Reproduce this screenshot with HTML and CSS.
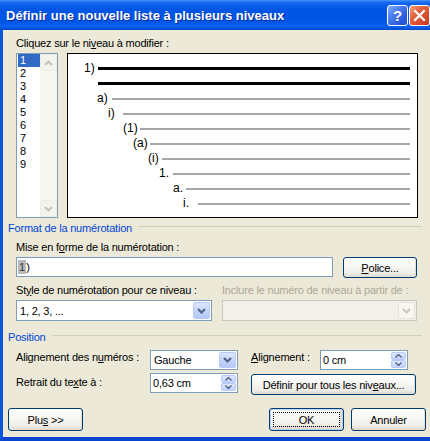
FILE: index.html
```html
<!DOCTYPE html>
<html lang="fr">
<head>
<meta charset="utf-8">
<title>Définir une nouvelle liste à plusieurs niveaux</title>
<link rel="stylesheet" href="styles.css">
</head>
<body>
<div class="window">
  <div class="titlebar">
    <div class="title">Définir une nouvelle liste à plusieurs niveaux</div>
    <div class="cap-btn cap-help">?</div>
    <div class="cap-btn cap-close">
      <svg width="13" height="13" viewBox="0 0 13 13"><path d="M2 2l9 9M11 2l-9 9" stroke="#fff" stroke-width="2.2" stroke-linecap="square"/></svg>
    </div>
  </div>
  <div class="frame">
    <div class="client">
      <div class="label ind">Cliquez sur le ni<u>v</u>eau à modifier :</div>

      <div class="pick ind">
        <div class="levels">
          <ul class="level-list">
            <li class="is-sel">1</li>
            <li>2</li>
            <li>3</li>
            <li>4</li>
            <li>5</li>
            <li>6</li>
            <li>7</li>
            <li>8</li>
            <li>9</li>
          </ul>
          <div class="vscroll">
            <span class="sb-btn"><svg width="9" height="6" viewBox="0 0 9 6"><path d="M1 5l3.5-3.5L8 5" stroke="#C3C3BE" stroke-width="2" fill="none"/></svg></span>
            <span class="sb-track"></span>
            <span class="sb-btn"><svg width="9" height="6" viewBox="0 0 9 6"><path d="M1 1l3.5 3.5L8 1" stroke="#C3C3BE" stroke-width="2" fill="none"/></svg></span>
          </div>
        </div>

        <div class="preview">
          <div class="pv-row main lv1"><span class="pv-num">1)</span><span class="pv-line"></span></div>
          <div class="pv-row main lv1b"><span class="pv-line"></span></div>
          <div class="pv-row lv2"><span class="pv-num">a)</span><span class="pv-line"></span></div>
          <div class="pv-row lv3"><span class="pv-num">i)</span><span class="pv-line"></span></div>
          <div class="pv-row lv4"><span class="pv-num">(1)</span><span class="pv-line"></span></div>
          <div class="pv-row lv5"><span class="pv-num">(a)</span><span class="pv-line"></span></div>
          <div class="pv-row lv6"><span class="pv-num">(i)</span><span class="pv-line"></span></div>
          <div class="pv-row lv7"><span class="pv-num">1.</span><span class="pv-line"></span></div>
          <div class="pv-row lv8"><span class="pv-num">a.</span><span class="pv-line"></span></div>
          <div class="pv-row lv9"><span class="pv-num">i.</span><span class="pv-line"></span></div>
        </div>
      </div>

      <div class="group group-format"><span class="group-title">Format de la numérotation</span><span class="group-rule"></span></div>

      <div class="label ind fmt-label">Mise en f<u>o</u>rme de la numérotation :</div>
      <div class="row ind fmt-row">
        <div class="edit fmt-edit"><span class="hl">1</span>)</div>
        <button class="btn police"><u>P</u>olice...</button>
      </div>

      <div class="row ind style-labels">
        <span class="label style-lbl">St<u>y</u>le de numérotation pour ce niveau :</span>
        <span class="label is-disabled">Inclure le numéro de niveau à partir de :</span>
      </div>
      <div class="row ind combo-row">
        <div class="combo style-combo">
          <span class="combo-text">1, 2, 3, ...</span>
          <span class="drop"><svg width="9" height="6" viewBox="0 0 9 6"><path d="M1 1l3.5 3.5L8 1" stroke="#4D6185" stroke-width="2" fill="none"/></svg></span>
        </div>
        <div class="combo combo-off">
          <span class="combo-text"></span>
          <span class="drop"><svg width="9" height="6" viewBox="0 0 9 6"><path d="M1 1l3.5 3.5L8 1" stroke="#C9C7BA" stroke-width="2" fill="none"/></svg></span>
        </div>
      </div>

      <div class="group group-pos"><span class="group-title">Position</span><span class="group-rule"></span></div>

      <div class="row ind pos-row1">
        <span class="label pos-lbl">Alignement des n<u>u</u>méros :</span>
        <div class="combo short-combo">
          <span class="combo-text">Gauche</span>
          <span class="drop"><svg width="9" height="6" viewBox="0 0 9 6"><path d="M1 1l3.5 3.5L8 1" stroke="#4D6185" stroke-width="2" fill="none"/></svg></span>
        </div>
        <span class="label align-lbl"><u>A</u>lignement :</span>
        <div class="spin">
          <span class="spin-text">0 cm</span>
          <span class="spin-btns">
            <span class="sp"><svg width="7" height="4" viewBox="0 0 7 4"><path d="M0.5 3.5l3-3 3 3" stroke="#4D6185" stroke-width="1.4" fill="none"/></svg></span>
            <span class="sp"><svg width="7" height="4" viewBox="0 0 7 4"><path d="M0.5 0.5l3 3 3-3" stroke="#4D6185" stroke-width="1.4" fill="none"/></svg></span>
          </span>
        </div>
      </div>

      <div class="row ind pos-row2">
        <span class="label pos-lbl">Retrait du te<u>x</u>te à :</span>
        <div class="spin">
          <span class="spin-text">0,63 cm</span>
          <span class="spin-btns">
            <span class="sp"><svg width="7" height="4" viewBox="0 0 7 4"><path d="M0.5 3.5l3-3 3 3" stroke="#4D6185" stroke-width="1.4" fill="none"/></svg></span>
            <span class="sp"><svg width="7" height="4" viewBox="0 0 7 4"><path d="M0.5 0.5l3 3 3-3" stroke="#4D6185" stroke-width="1.4" fill="none"/></svg></span>
          </span>
        </div>
        <button class="btn all-btn">Définir pour tous les niv<u>e</u>aux...</button>
      </div>

      <div class="row footer">
        <button class="btn">Plu<u>s</u> &gt;&gt;</button>
        <button class="btn btn-default ok-btn">OK</button>
        <button class="btn cancel-btn">Annuler</button>
      </div>
    </div>
  </div>
</div>
</body>
</html>
```

FILE: styles.css
```css
* {
  box-sizing: border-box;
}

html,
body {
  margin: 0;
  padding: 0;
}

body {
  width: 430px;
  height: 441px;
  overflow: hidden;
  background: #ECE9D8;
  font-family: "Liberation Sans", Arial, sans-serif;
  font-size: 11px;
  color: #000;
}

u {
  text-decoration: underline;
  text-underline-offset: 1px;
}

/* window chrome */
.window {
  width: 430px;
  height: 441px;
  display: flex;
  flex-direction: column;
  background: #0054E3;
}

.titlebar {
  flex: none;
  height: 30px;
  display: flex;
  align-items: flex-start;
  background: linear-gradient(180deg,
    #4A96FF 0px, #1B6EF2 2px, #0A60E9 5px, #0056E5 9px,
    #0054E3 18px, #0058E8 23px, #0A64F0 26px, #0758E4 28px, #0044C4 30px);
}

.title {
  flex: 1;
  margin: 8px 0 0 6px;
  font: bold 13px/16px "Liberation Sans", Arial, sans-serif;
  color: #fff;
  white-space: nowrap;
  text-shadow: 1px 1px 0 #0A2A9C;
}

.cap-btn {
  flex: none;
  width: 21px;
  height: 21px;
  margin-top: 5px;
  border: 1px solid #fff;
  border-radius: 3px;
  display: flex;
  align-items: center;
  justify-content: center;
}

.cap-help {
  margin-right: 1px;
  background: linear-gradient(135deg, #8AB0FA 0%, #4E7FEE 35%, #2A5ADB 75%, #2554D4 100%);
  color: #fff;
  font: bold 15px/1 "Liberation Sans", Arial, sans-serif;
}

.cap-close {
  background: linear-gradient(135deg, #F3A486 0%, #E5633F 35%, #D4482A 75%, #C23A1C 100%);
}

.frame {
  flex: 1;
  display: flex;
  border-left: 3px solid #0A55DE;
  border-bottom: 4px solid #0846D2;
  background: #ECE9D8;
}

.client {
  flex: 1;
  padding: 7px 4px 0 0;
  display: flex;
  flex-direction: column;
}

/* text */
.label {
  line-height: 13px;
  letter-spacing: -0.2px;
  white-space: nowrap;
}

.is-disabled {
  color: #ACA899;
}

.ind {
  margin-left: 13px;
}

.row {
  display: flex;
}

/* level picker + preview */
.pick {
  display: flex;
  margin-top: 3px;
  height: 165px;
}

.levels {
  width: 42px;
  height: 165px;
  border: 1px solid #7F9DB9;
  background: #fff;
  display: flex;
}

.level-list {
  list-style: none;
  margin: 0;
  padding: 0;
  width: 23px;
}

.level-list li {
  height: 13px;
  line-height: 13px;
  margin-left: 1px;
  padding-left: 2px;
}

.level-list .is-sel {
  background: #316AC5;
  color: #fff;
}

.vscroll {
  width: 17px;
  display: flex;
  flex-direction: column;
  background: #F7F7F1;
}

.sb-btn {
  width: 17px;
  height: 17px;
  border: 1px solid #EEEDE5;
  border-radius: 2px;
  background: #F4F3EE;
  display: flex;
  align-items: center;
  justify-content: center;
}

.sb-track {
  flex: 1;
}

.preview {
  width: 351px;
  height: 165px;
  margin-left: 9px;
  border: 1px solid #000;
  background: #fff;
  padding: 7px 7px 0 0;
}

.pv-row {
  height: 15px;
  display: flex;
  align-items: center;
}

.pv-num {
  flex: none;
  font-size: 12px;
  line-height: 15px;
  white-space: nowrap;
}

.pv-line {
  flex: 1;
  height: 2px;
  background: #A6A6A6;
}

.main .pv-line {
  height: 3px;
  background: #000;
}

/* number position and text indent for each level */
.lv1 { padding-left: 16px; }
.lv1 .pv-num { width: 14px; }
.lv1b { padding-left: 30px; }
.lv2 { padding-left: 29px; }
.lv2 .pv-num { width: 15px; }
.lv3 { padding-left: 40px; }
.lv3 .pv-num { width: 15px; }
.lv4 { padding-left: 55px; }
.lv4 .pv-num { width: 17px; }
.lv5 { padding-left: 65px; }
.lv5 .pv-num { width: 17px; }
.lv6 { padding-left: 80px; }
.lv6 .pv-num { width: 14px; }
.lv7 { padding-left: 91px; }
.lv7 .pv-num { width: 14px; }
.lv8 { padding-left: 105px; }
.lv8 .pv-num { width: 13px; }
.lv9 { padding-left: 115px; }
.lv9 .pv-num { width: 15px; }

/* group headings */
.group {
  display: flex;
  align-items: center;
  margin-left: 5px;
  margin-right: 4px;
  line-height: 13px;
  color: #0046D5;
  letter-spacing: -0.2px;
  white-space: nowrap;
}

.group-rule {
  flex: 1;
  height: 1px;
  margin-left: 6px;
  margin-bottom: 5px;
  background: #D0D0BF;
}

.group-format {
  margin-top: 4px;
}

.group-pos {
  margin-top: 10px;
}

/* edit fields */
.fmt-label {
  margin-top: 6px;
}

.fmt-row {
  margin-top: 3px;
  align-items: flex-start;
}

.edit {
  height: 20px;
  border: 1px solid #7F9DB9;
  background: #fff;
  padding: 2px 0 0 1px;
  line-height: 14px;
}

.fmt-edit {
  width: 317px;
}

.hl {
  display: inline-block;
  padding: 0 1px;
  background: #B9B9B9;
  color: #333;
}

.style-labels {
  margin-top: 6px;
}

.style-lbl {
  width: 206px;
}

.combo-row {
  margin-top: 3px;
  gap: 10px;
}

.combo {
  height: 21px;
  border: 1px solid #7F9DB9;
  background: #fff;
  display: flex;
  align-items: center;
  padding-left: 3px;
}

.combo-text {
  flex: 1;
  letter-spacing: -0.2px;
  white-space: nowrap;
}

.drop {
  flex: none;
  width: 17px;
  height: 17px;
  margin-right: 1px;
  border: 1px solid #B7C9F4;
  border-radius: 2px;
  background: linear-gradient(180deg, #DCE6FD 0%, #C5D5FB 50%, #B4C8F8 100%);
  display: flex;
  align-items: center;
  justify-content: center;
}

.style-combo {
  width: 196px;
}

.combo-off {
  width: 195px;
  border-color: #C9C7BA;
  background: #F2F1E9;
}

.combo-off .drop {
  border-color: #E6E4DA;
  background: #F7F6F1;
}

/* position rows */
.pos-row1 {
  margin-top: 6px;
  height: 20px;
  align-items: flex-start;
}

.pos-row2 {
  margin-top: 3px;
  height: 21px;
  align-items: flex-start;
}

.pos-lbl {
  width: 134px;
  margin-top: 1px;
}

.pos-row2 .pos-lbl {
  margin-top: 3px;
}

.short-combo {
  width: 88px;
  height: 20px;
}

.short-combo .drop {
  height: 16px;
}

.align-lbl {
  width: 69px;
  margin-left: 13px;
  margin-top: 1px;
}

.spin {
  width: 88px;
  height: 20px;
  border: 1px solid #7F9DB9;
  background: #fff;
  display: flex;
  align-items: center;
  padding-left: 2px;
}

.spin-text {
  flex: 1;
  letter-spacing: -0.2px;
  white-space: nowrap;
}

.spin-btns {
  flex: none;
  width: 15px;
  height: 16px;
  margin-right: 1px;
  display: flex;
  flex-direction: column;
}

.sp {
  flex: 1;
  border: 1px solid #B7C9F4;
  border-radius: 2px;
  background: linear-gradient(180deg, #DCE6FD 0%, #C2D3FB 100%);
  display: flex;
  align-items: center;
  justify-content: center;
}

/* push buttons */
.btn {
  position: relative;
  width: 75px;
  height: 23px;
  padding: 0;
  font: inherit;
  letter-spacing: -0.2px;
  color: #000;
  border: 1px solid #003C74;
  border-radius: 3px;
  background: linear-gradient(180deg, #FFFFFF 0%, #F7F7F4 40%, #EEEDE7 80%, #DCD7CC 100%);
  box-shadow: inset -1px -1px 0 #E2DED3;
  white-space: nowrap;
}

.police {
  width: 74px;
  height: 21px;
  margin-left: 10px;
}

.all-btn {
  width: 165px;
  height: 21px;
  margin-left: 13px;
  margin-top: 1px;
}

.footer {
  margin-top: 14px;
  margin-left: 5px;
}

.ok-btn {
  margin-left: auto;
}

.cancel-btn {
  margin-left: 7px;
}

.btn-default {
  box-shadow: inset 0 0 0 1px #BCD0F8, inset -1px -1px 0 2px #E2DED3;
}

.btn-default::after {
  content: "";
  position: absolute;
  left: 3px;
  top: 3px;
  right: 3px;
  bottom: 3px;
  border: 1px dotted #000;
}
```
